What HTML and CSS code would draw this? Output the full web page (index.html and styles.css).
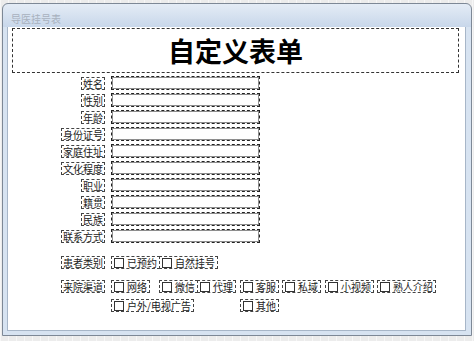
FILE: index.html
```html
<!DOCTYPE html>
<html lang="zh-CN">
<head>
    <meta charset="UTF-8">
    <title>导医挂号表</title>
    <link rel="stylesheet" href="styles.css">
</head>
<body>
    <div class="window">
        <div class="titlebar">导医挂号表</div>
        <div class="client">
            <div class="heading">自定义表单</div>

            <!-- basic info rows -->
            <div class="form">
                <span class="label">姓名</span><span class="input"></span>
                <span class="label">性别</span><span class="input"></span>
                <span class="label">年龄</span><span class="input"></span>
                <span class="label">身份证号</span><span class="input"></span>
                <span class="label">家庭住址</span><span class="input"></span>
                <span class="label">文化程度</span><span class="input"></span>
                <span class="label">职业</span><span class="input"></span>
                <span class="label">籍贯</span><span class="input"></span>
                <span class="label">民族</span><span class="input"></span>
                <span class="label">联系方式</span><span class="input"></span>
            </div>

            <div class="group patient">
                <span class="label">患者类别</span>
                <div class="options">
                    <label class="check"><span class="box"></span>已预约</label>
                    <label class="check"><span class="box"></span>自然挂号</label>
                </div>
            </div>

            <div class="group channel">
                <span class="label">来院渠道</span>
                <div class="options">
                    <label class="check"><span class="box"></span>网络</label>
                    <label class="check"><span class="box"></span>微信</label>
                    <label class="check"><span class="box"></span>代理</label>
                    <label class="check"><span class="box"></span>客服</label>
                    <label class="check"><span class="box"></span>私域</label>
                    <label class="check"><span class="box"></span>小视频</label>
                    <label class="check"><span class="box"></span>熟人介绍</label>
                    <label class="check wide"><span class="box"></span>户外/电视广告</label>
                    <label class="check"><span class="box"></span>其他</label>
                </div>
            </div>
        </div>
    </div>
</body>
</html>
```
FILE: styles.css
```css
body {
    margin: 0;
    width: 474px;
    height: 341px;
    overflow: hidden;
    font-family: "Noto Sans CJK SC", "Liberation Sans", sans-serif;
    background-color: #ececec;
    background-image: repeating-linear-gradient(90deg, #f6f6f6 0 1px, transparent 1px 8px);
}
.window {
    margin: 3px 2px 0 2px;
    height: 331px;
    border: 1px solid #7d8896;
    border-radius: 6px 6px 0 0;
    background: linear-gradient(#e4ecf6, #c8d7ea 23px, #d7e3f1 23px);
    display: flex;
    flex-direction: column;
}
.titlebar {
    height: 14px;
    padding: 9px 0 0 8px;
    font-size: 10px;
    line-height: 12px;
    color: #a8b1be;
}
.client {
    flex: 1;
    margin: 0 5px 4px 4px;
    padding: 1px 6px 0 4px;
    border: 1px solid #a7b6c8;
    border-top: none;
    background: #fff;
}
.heading {
    height: 43px;
    border: 1px dashed #333;
    display: flex;
    align-items: center;
    justify-content: center;
    font-size: 27px;
    font-weight: 700;
    color: #000;
}
.form {
    margin-top: 3px;
    display: grid;
    grid-template-columns: 93px 149px;
    column-gap: 6px;
    row-gap: 3px;
    align-items: center;
}
.label {
    justify-self: end;
    padding: 0 1px;
    border: 1px dashed #444;
    font-size: 10px;
    line-height: 11px;
    color: #222;
    white-space: nowrap;
}
.input {
    height: 12px;
    border: 1px dashed #222;
    box-shadow: inset 0 0 0 1px #8e8e8e;
}
.group {
    display: grid;
    grid-template-columns: 93px auto;
    column-gap: 6px;
    align-items: start;
}
.patient {
    margin-top: 13px;
}
.channel {
    margin-top: 11px;
}
.options {
    display: grid;
    grid-template-columns: 48px 38px 43px 42px 43px 52px auto;
    row-gap: 6px;
}
.patient .options {
    grid-template-columns: 48px auto;
}
.check {
    justify-self: start;
    display: flex;
    align-items: center;
    padding: 0 2px;
    border: 1px dashed #444;
    font-size: 10px;
    line-height: 11px;
    color: #222;
    white-space: nowrap;
}
.check .box {
    width: 8px;
    height: 8px;
    border: 1px solid #333;
    margin-right: 3px;
}
.wide {
    grid-column: 1 / span 3;
}
```
